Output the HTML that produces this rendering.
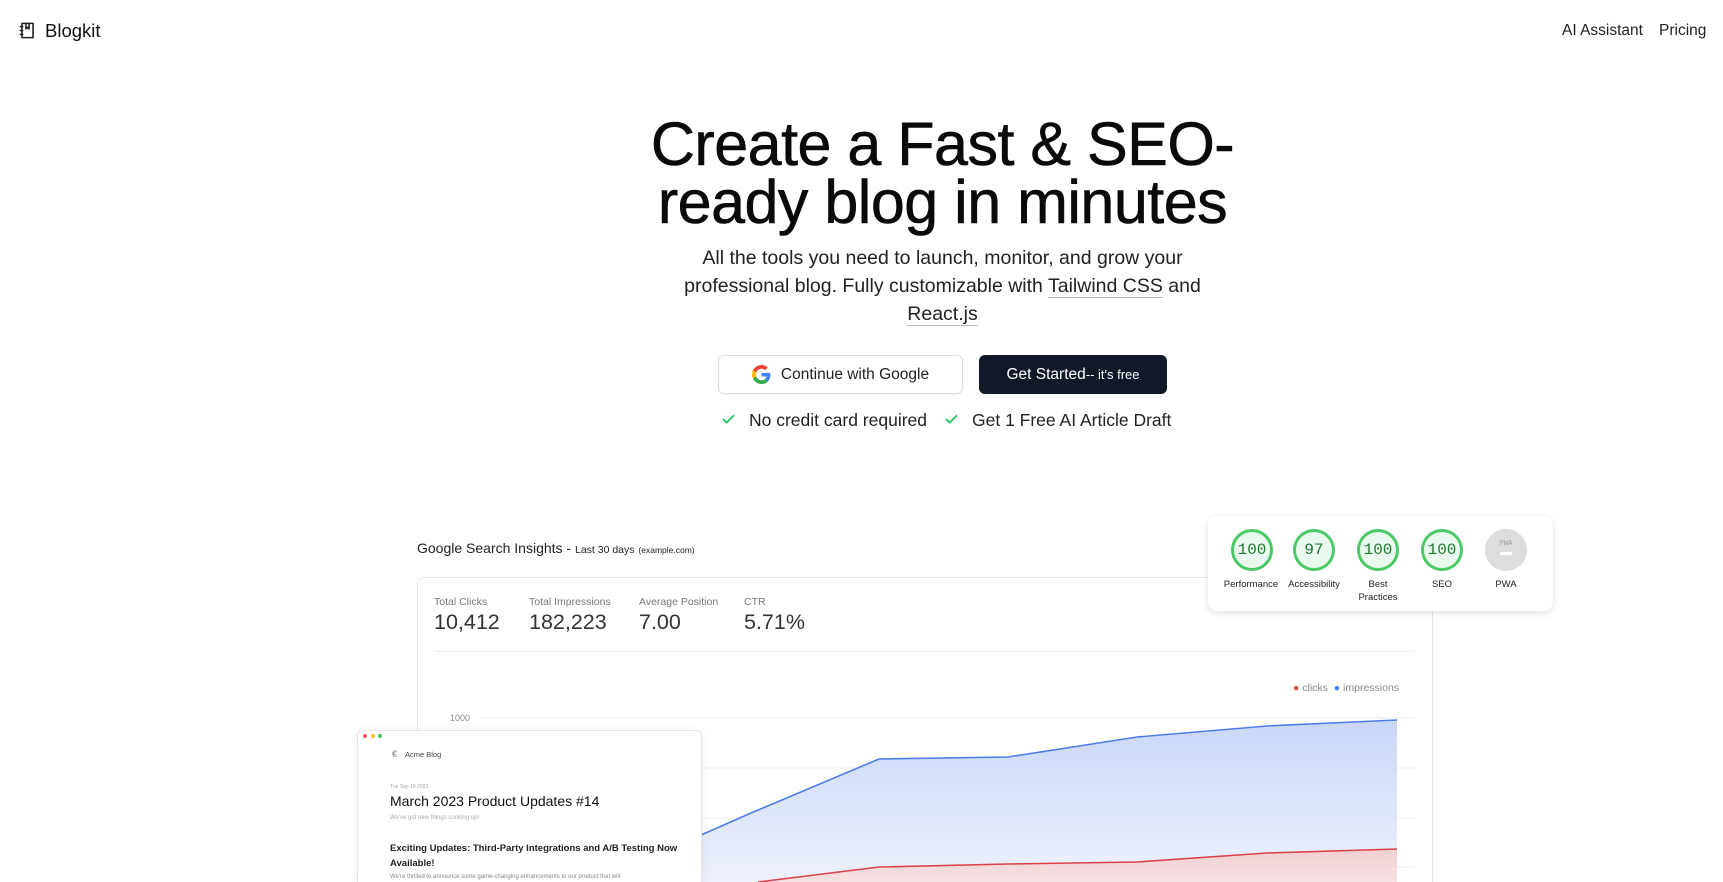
<!DOCTYPE html>
<html><head><meta charset="utf-8"><style>
*{margin:0;padding:0;box-sizing:border-box}
html,body{width:1723px;height:882px;overflow:hidden}
body{background:#fff;font-family:"Liberation Sans",sans-serif;color:#111}
#w{position:relative;width:1723px;height:882px;overflow:hidden}
.a{position:absolute;white-space:nowrap}
h1{position:absolute;left:81px;width:1723px;top:115px;text-align:center;font-size:61px;line-height:58px;font-weight:400;letter-spacing:-0.5px;color:#0a0a0a;-webkit-text-stroke:0.6px #0a0a0a}
.sub{position:absolute;left:81px;width:1723px;top:244px;text-align:center;font-size:19.5px;line-height:28px;color:#222}
.sub u{text-decoration:none;border-bottom:1px solid #bbb}
.btn{position:absolute;top:355px;height:39px;border-radius:6px;font-size:15.5px;display:flex;align-items:center;justify-content:center}
.card{position:absolute;left:417px;top:577px;width:1016px;height:305px;border:1px solid #e8e8e8;border-bottom:none;border-radius:8px 8px 0 0;background:#fff}
.lab{position:absolute;top:596px;font-size:10.5px;color:#777}
.val{position:absolute;top:610px;font-size:21.5px;color:#333}
.lh{position:absolute;left:1208px;top:516px;width:345px;height:95px;background:#fff;border-radius:10px;box-shadow:0 2px 8px rgba(0,0,0,.13)}
.c{position:absolute;top:529px;width:42px;height:42px;border-radius:50%;border:3px solid #4cc866;background:#eaf9ee;color:#1e7a2f;font-family:"Liberation Mono",monospace;font-size:16px;display:flex;align-items:center;justify-content:center}
.cl{position:absolute;font-size:9.5px;color:#222;text-align:center;width:70px;line-height:13px}
.blog{position:absolute;left:357px;top:730px;width:345px;height:152px;background:#fff;border:1px solid #e6e6e6;border-bottom:none;border-radius:6px 6px 0 0;box-shadow:0 2px 10px rgba(0,0,0,.08)}
.dot{position:absolute;top:734px;width:4px;height:4px;border-radius:50%}
</style></head><body><div id="w">
<svg class="a" style="left:18px;top:21px" width="19" height="19" viewBox="0 0 24 24" fill="none" stroke="#222" stroke-width="2" stroke-linecap="round" stroke-linejoin="round"><path d="M5 3h14v18H5z"/><path d="M3 7h3M3 12h3M3 17h3"/><path d="M10 3v7l2-2 2 2V3"/></svg>
<div class="a" style="left:45px;top:20px;font-size:18.5px;color:#111">Blogkit</div>
<div class="a" style="left:1562px;top:22px;font-size:15.5px;color:#222">AI Assistant</div>
<div class="a" style="left:1659px;top:22px;font-size:15.5px;color:#222">Pricing</div>
<h1>Create a Fast &amp; SEO-<br>ready blog in minutes</h1>
<div class="sub">All the tools you need to launch, monitor, and grow your<br>professional blog. Fully customizable with <u>Tailwind CSS</u> and<br><u>React.js</u></div>
<div class="btn" style="left:718px;width:245px;border:1px solid #ddd;background:#fff;color:#222;box-shadow:0 1px 2px rgba(0,0,0,.05)">
<svg width="19" height="19" viewBox="0 0 48 48" style="margin-right:10px"><path fill="#EA4335" d="M24 9.5c3.5 0 6.6 1.2 9.1 3.6l6.8-6.8C35.8 2.4 30.3 0 24 0 14.6 0 6.6 5.4 2.7 13.3l7.9 6.1C12.5 13.6 17.8 9.5 24 9.5z"/><path fill="#4285F4" d="M46.5 24.5c0-1.6-.1-3.1-.4-4.5H24v9h12.7c-.6 3-2.3 5.5-4.8 7.2l7.7 6c4.5-4.2 6.9-10.3 6.9-17.7z"/><path fill="#FBBC05" d="M10.5 28.6c-.5-1.4-.8-3-.8-4.6s.3-3.2.8-4.6l-7.9-6.1C1 16.5 0 20.1 0 24s1 7.5 2.7 10.7l7.8-6.1z"/><path fill="#34A853" d="M24 48c6.5 0 11.9-2.1 15.9-5.8l-7.7-6c-2.2 1.5-5 2.3-8.2 2.3-6.2 0-11.5-4.2-13.4-9.8l-7.9 6.1C6.6 42.6 14.6 48 24 48z"/></svg>Continue with Google</div>
<div class="btn" style="left:979px;width:188px;background:#111827;color:#fff">Get Started<span style="font-size:13px">-- it's free</span></div>
<svg class="a" style="left:721px;top:412px" width="15" height="15" viewBox="0 0 24 24" fill="none" stroke="#22c55e" stroke-width="3" stroke-linecap="round" stroke-linejoin="round"><path d="M4 12l5 5L20 6"/></svg>
<div class="a" style="left:749px;top:410px;font-size:17.5px;color:#222">No credit card required</div>
<svg class="a" style="left:944px;top:412px" width="15" height="15" viewBox="0 0 24 24" fill="none" stroke="#22c55e" stroke-width="3" stroke-linecap="round" stroke-linejoin="round"><path d="M4 12l5 5L20 6"/></svg>
<div class="a" style="left:972px;top:410px;font-size:17.5px;color:#222">Get 1 Free AI Article Draft</div>

<div class="a" style="left:417px;top:540px;font-size:14px;color:#222">Google Search Insights - <span style="font-size:10.5px">Last 30 days</span> <span style="font-size:8.5px">(example.com)</span></div>
<div class="card"></div>
<div class="lab" style="left:434px">Total Clicks</div><div class="val" style="left:434px">10,412</div>
<div class="lab" style="left:529px">Total Impressions</div><div class="val" style="left:529px">182,223</div>
<div class="lab" style="left:639px">Average Position</div><div class="val" style="left:639px">7.00</div>
<div class="lab" style="left:744px">CTR</div><div class="val" style="left:744px">5.71%</div>
<div class="a" style="left:434px;top:651px;width:981px;height:1px;background:#ececec"></div>
<div class="a" style="left:1293px;top:682px;font-size:10.5px;color:#888"><span style="color:#e04848">●</span> clicks &nbsp;<span style="color:#4a7ff0">●</span> impressions</div>
<div class="a" style="left:450px;top:713px;font-size:9px;color:#888">1000</div>
<svg class="a" style="left:0;top:0" width="1723" height="882">
<defs><linearGradient id="gb" x1="0" y1="0" x2="0" y2="1"><stop offset="0" stop-color="#c9d6f6"/><stop offset="1" stop-color="#eef2fc"/></linearGradient><linearGradient id="gr" x1="0" y1="0" x2="0" y2="1"><stop offset="0" stop-color="#f1cfd2"/><stop offset="1" stop-color="#f6e2e4"/></linearGradient></defs>
<g stroke="#eeeeee" stroke-width="1"><path d="M478 718H1414M478 768H1414M478 818H1414M478 867H1414"/></g>
<path d="M620 882L701 835L751 813L879 759L1008 757L1137 737L1267 726L1397 720V882Z" fill="url(#gb)"/>
<path d="M701 835L751 813L879 759L1008 757L1137 737L1267 726L1397 720" fill="none" stroke="#4f7ee8" stroke-width="1.6"/>
<path d="M758 882L879 867L1008 864L1137 862L1267 853L1397 849V882Z" fill="url(#gr)"/>
<path d="M758 882L879 867L1008 864L1137 862L1267 853L1397 849" fill="none" stroke="#d9434a" stroke-width="1.6"/>
</svg>
<div class="blog"></div>
<div class="dot" style="left:363px;background:#ef5a5a"></div><div class="dot" style="left:371px;background:#f3c33c"></div><div class="dot" style="left:378px;background:#4cc35a"></div>
<div class="a" style="left:392px;top:749px;font-size:9px;color:#777">&#x20AC;</div>
<div class="a" style="left:405px;top:750px;font-size:7.5px;color:#444">Acme Blog</div>
<div class="a" style="left:390px;top:784px;font-size:5px;color:#aaa">Tue Sep 19 2023</div>
<div class="a" style="left:390px;top:793px;font-size:14px;color:#111">March 2023 Product Updates #14</div>
<div class="a" style="left:390px;top:815px;font-size:6px;color:#aaa">We've got new things cooking up!</div>
<div class="a" style="left:390px;top:841px;font-size:9.5px;font-weight:bold;color:#222;line-height:15px">Exciting Updates: Third-Party Integrations and A/B Testing Now<br>Available!</div>
<div class="a" style="left:390px;top:874px;font-size:6px;line-height:7px;color:#888">We're thrilled to announce some game-changing enhancements to our product that will</div>

<div class="lh"></div>
<div class="c" style="left:1231px">100</div>
<div class="c" style="left:1293px">97</div>
<div class="c" style="left:1357px">100</div>
<div class="c" style="left:1421px">100</div>
<div class="c" style="left:1485px;border-color:#ddd;background:#ddd;color:#999;font-size:7px;flex-direction:column"><span style="margin-top:-6px">PWA</span><span style="display:block;width:12px;height:3px;background:#fff;margin-top:4px"></span></div>
<div class="cl" style="left:1216px;top:578px">Performance</div>
<div class="cl" style="left:1279px;top:578px">Accessibility</div>
<div class="cl" style="left:1343px;top:578px">Best<br>Practices</div>
<div class="cl" style="left:1407px;top:578px">SEO</div>
<div class="cl" style="left:1471px;top:578px">PWA</div>
</div></body></html>
